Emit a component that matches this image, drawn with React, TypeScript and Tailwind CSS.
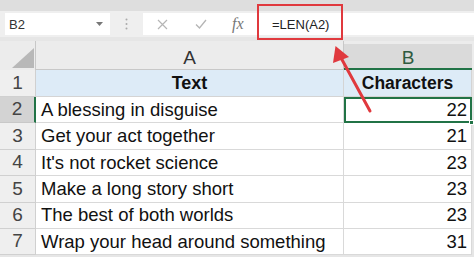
import React from "react";

const rows: [string, string, string][] = [
  ["2", "A blessing in disguise", "22"],
  ["3", "Get your act together", "21"],
  ["4", "It's not rocket science", "23"],
  ["5", "Make a long story short", "23"],
  ["6", "The best of both worlds", "23"],
  ["7", "Wrap your head around something", "31"],
];

export default function App() {
  return (
    <div
      className="relative w-[474px] h-[257px] overflow-hidden bg-[#e6e6e6]"
      style={{ fontFamily: '"Liberation Sans", Arial, sans-serif' }}
    >
      {/* top band */}
      <div className="h-[11px] bg-[#dedede]" />
      {/* formula bar */}
      <div className="h-[26px] bg-[#efefef] flex items-center">
        <div className="ml-[5px] w-[105px] h-[22px] bg-white flex items-center justify-between pl-[4px] pr-[7px]">
          <span className="text-[13px] text-[#333] leading-none">B2</span>
          <svg width="7" height="4" viewBox="0 0 7 4">
            <path d="M0 0 L7 0 L3.5 4 Z" fill="#777" />
          </svg>
        </div>
        <div className="w-[33px] flex justify-center">
          <svg width="3" height="12" viewBox="0 0 3 12">
            <circle cx="1.5" cy="1.5" r="1" fill="#aaa" />
            <circle cx="1.5" cy="6" r="1" fill="#aaa" />
            <circle cx="1.5" cy="10.5" r="1" fill="#aaa" />
          </svg>
        </div>
        <div className="flex-1 h-[22px] bg-white flex items-center">
          <div className="w-[114px] flex items-center">
            <svg className="ml-[14px]" width="11" height="11" viewBox="0 0 11 11">
              <path d="M1 1 L10 10 M10 1 L1 10" stroke="#b5b5b5" strokeWidth="1.2" fill="none" />
            </svg>
            <svg className="ml-[27px]" width="12" height="10" viewBox="0 0 12 10">
              <path d="M1 5.5 L4.5 9 L11 1" stroke="#b5b5b5" strokeWidth="1.3" fill="none" />
            </svg>
            <span
              className="ml-[25px] text-[16px] italic text-[#777] leading-none"
              style={{ fontFamily: '"Liberation Serif", "Times New Roman", serif' }}
            >
              fx
            </span>
          </div>
          <span className="ml-[15px] text-[13px] text-[#222] leading-none">=LEN(A2)</span>
        </div>
      </div>
      {/* spacer */}
      <div className="h-[4px] bg-[#e6e6e6]" />
      {/* column headers */}
      <div className="h-[29px] flex bg-[#ececec]">
        <div className="w-[36px] relative border-r border-[#c8c8c8]">
          <svg className="absolute right-[1px] bottom-[2px]" width="22" height="20" viewBox="0 0 22 20">
            <path d="M22 0 L22 20 L0 20 Z" fill="#b8b8b8" />
          </svg>
        </div>
        <div className="w-[308px] flex items-end justify-center pb-[2px] text-[19px] leading-none text-[#333] border-r border-[#c8c8c8] border-b border-b-[#c8c8c8]">
          A
        </div>
        <div className="w-[128px] flex flex-col">
          <div className="h-[3px] bg-[#ececec]" />
          <div className="flex-1 bg-[#dadada] flex items-end justify-center pb-[1px] text-[19px] leading-none text-[#2f5b40] border-b-2 border-[#217346]">
            B
          </div>
        </div>
        <div className="flex-1 bg-[#ececec]" />
      </div>
      {/* rows */}
      <div className="flex flex-col bg-white">
        <div className="h-[27px] flex">
          <div className="w-[36px] bg-[#efefef] border-r border-b border-[#d0d0d0] flex items-center justify-center text-[19px] text-[#444]">
            1
          </div>
          <div className="w-[308px] bg-[#ddebf7] border-r border-b border-[#d4d4d4] flex items-center justify-center text-[18px] font-bold text-[#111]">
            Text
          </div>
          <div className="w-[128px] bg-[#ddebf7] border-r border-b border-[#d4d4d4] flex items-center justify-center text-[17.5px] font-bold text-[#111]">
            Characters
          </div>
          <div className="flex-1 bg-[#e6e6e6]" />
        </div>
        {rows.map(([n, t, c], i) => {
          const sel = i === 0;
          return (
            <div key={n} className="h-[26.4px] flex">
              <div
                className={
                  sel
                    ? "w-[36px] bg-[#d3d3d3] border-r-2 border-r-[#217346] border-b border-b-[#c8c8c8] flex items-center justify-center text-[19px] text-[#444]"
                    : "w-[36px] bg-[#efefef] border-r border-b border-[#d0d0d0] flex items-center justify-center text-[19px] text-[#444]"
                }
              >
                {n}
              </div>
              <div className="w-[308px] border-r border-b border-[#d9d9d9] flex items-center pl-[5px] text-[18.5px] text-[#111] whitespace-nowrap">
                {t}
              </div>
              <div
                className={
                  sel
                    ? "relative w-[128px] border-2 border-[#217346] flex items-center justify-end pr-[3px] text-[18.5px] text-[#111]"
                    : "w-[128px] border-r border-b border-[#d9d9d9] flex items-center justify-end pr-[4px] text-[18.5px] text-[#111]"
                }
              >
                {c}
                {sel && (
                  <div className="absolute right-[-4px] bottom-[-4px] w-[5px] h-[5px] bg-[#217346] border border-white" />
                )}
              </div>
              <div className="flex-1 bg-[#e6e6e6]" />
            </div>
          );
        })}
      </div>
      {/* annotation overlay */}
      <div className="absolute left-[257px] top-[4px] w-[86px] h-[36px] border-2 border-[#e0393e]" />
      <svg className="absolute left-0 top-0 pointer-events-none" width="474" height="257" viewBox="0 0 474 257">
        <path d="M370 111 L340 56" stroke="#e0393e" strokeWidth="3" strokeLinecap="round" fill="none" />
        <path d="M335.5 46 L333 63 L349 57 Z" fill="#e0393e" />
      </svg>
    </div>
  );
}
